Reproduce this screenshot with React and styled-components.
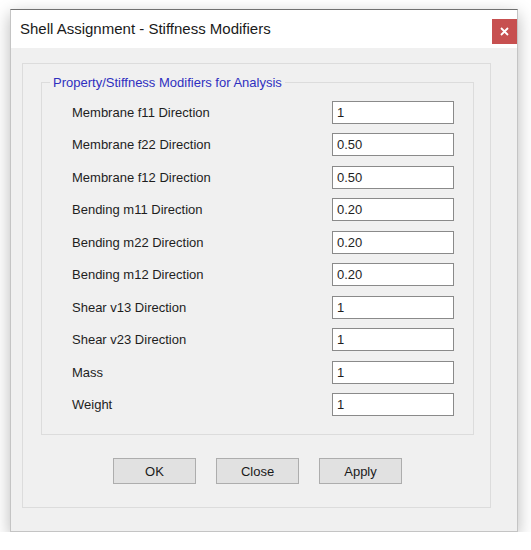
import React from 'react'
import styled, { createGlobalStyle } from 'styled-components'

const GlobalStyle = createGlobalStyle`
  html, body {
    margin: 0;
    padding: 0;
    background: #ffffff;
  }
  body {
    font-family: "Liberation Sans", Arial, sans-serif;
  }
`;

const Window = styled.div`
  width: 508px;
  height: 523px;
  margin: 9px 0 0 10px;
  box-sizing: border-box;
  border: 1px solid #c4c4c4;
  border-top-color: #707070;
  box-shadow: 0 5px 16px rgba(0, 0, 0, 0.28);
  display: flex;
  flex-direction: column;
  background: #f0f0f0;
`;

const TitleBar = styled.div`
  height: 38px;
  background: #ffffff;
  display: flex;
  justify-content: space-between;
  padding-left: 9px;
  flex-shrink: 0;
`;

const Title = styled.span`
  font-size: 15px;
  line-height: 38px;
  color: #1a1a1a;
`;

const CloseButton = styled.button`
  width: 25px;
  height: 25px;
  margin-top: 9px;
  padding: 0;
  border: none;
  background: #c75050;
  display: flex;
  align-items: center;
  justify-content: center;
`;

const Body = styled.div`
  flex: 1;
  padding: 15px 26px 23px 11px;
  display: flex;
`;

const Panel = styled.div`
  flex: 1;
  border: 1px solid #dcdcdc;
  padding: 11px 16px 0 18px;
  display: flex;
  flex-direction: column;
`;

const Group = styled.fieldset`
  margin: 0;
  border: 1px solid #dcdcdc;
  padding: 0;
`;

const Legend = styled.legend`
  margin-left: 8px;
  padding: 0 3px;
  font-size: 13px;
  line-height: 15px;
  color: #2f2fbf;
`;

const Rows = styled.div`
  margin: 10.5px 19px 18px 30px;
  display: grid;
  grid-template-columns: 1fr 122px;
  grid-auto-rows: 23px;
  row-gap: 9.5px;
  align-items: center;
`;

const Label = styled.label`
  font-size: 13px;
  color: #1e1e1e;
`;

const Field = styled.input`
  box-sizing: border-box;
  width: 122px;
  height: 23px;
  border: 1px solid #8a8a8a;
  background: #ffffff;
  padding: 0 4px;
  font-family: "Liberation Sans", Arial, sans-serif;
  font-size: 13px;
  color: #1e1e1e;
  outline: none;
`;

const ButtonRow = styled.div`
  margin-top: 23px;
  display: flex;
  justify-content: center;
  gap: 20px;
`;

const Button = styled.button`
  width: 83px;
  height: 26px;
  box-sizing: border-box;
  border: 1px solid #adadad;
  background: #e1e1e1;
  font-family: "Liberation Sans", Arial, sans-serif;
  font-size: 13px;
  color: #1a1a1a;
  padding: 0;
`;

const modifiers = [
  ['Membrane f11 Direction', '1'],
  ['Membrane f22 Direction', '0.50'],
  ['Membrane f12 Direction', '0.50'],
  ['Bending m11 Direction', '0.20'],
  ['Bending m22 Direction', '0.20'],
  ['Bending m12 Direction', '0.20'],
  ['Shear v13 Direction', '1'],
  ['Shear v23 Direction', '1'],
  ['Mass', '1'],
  ['Weight', '1'],
]

const App = () => {
  return (
    <>
      <GlobalStyle />
      <Window>
        <TitleBar>
          <Title>Shell Assignment - Stiffness Modifiers</Title>
          <CloseButton aria-label="Close">
            <svg width="9" height="9" viewBox="0 0 9 9">
              <path d="M1 1 L8 8 M8 1 L1 8" stroke="#fff" strokeWidth="1.8" />
            </svg>
          </CloseButton>
        </TitleBar>
        <Body>
          <Panel>
            <Group>
              <Legend>Property/Stiffness Modifiers for Analysis</Legend>
              <Rows>
                {modifiers.map(([name, value]) => (
                  <React.Fragment key={name}>
                    <Label>{name}</Label>
                    <Field defaultValue={value} />
                  </React.Fragment>
                ))}
              </Rows>
            </Group>
            <ButtonRow>
              <Button>OK</Button>
              <Button>Close</Button>
              <Button>Apply</Button>
            </ButtonRow>
          </Panel>
        </Body>
      </Window>
    </>
  )
}

export default App
